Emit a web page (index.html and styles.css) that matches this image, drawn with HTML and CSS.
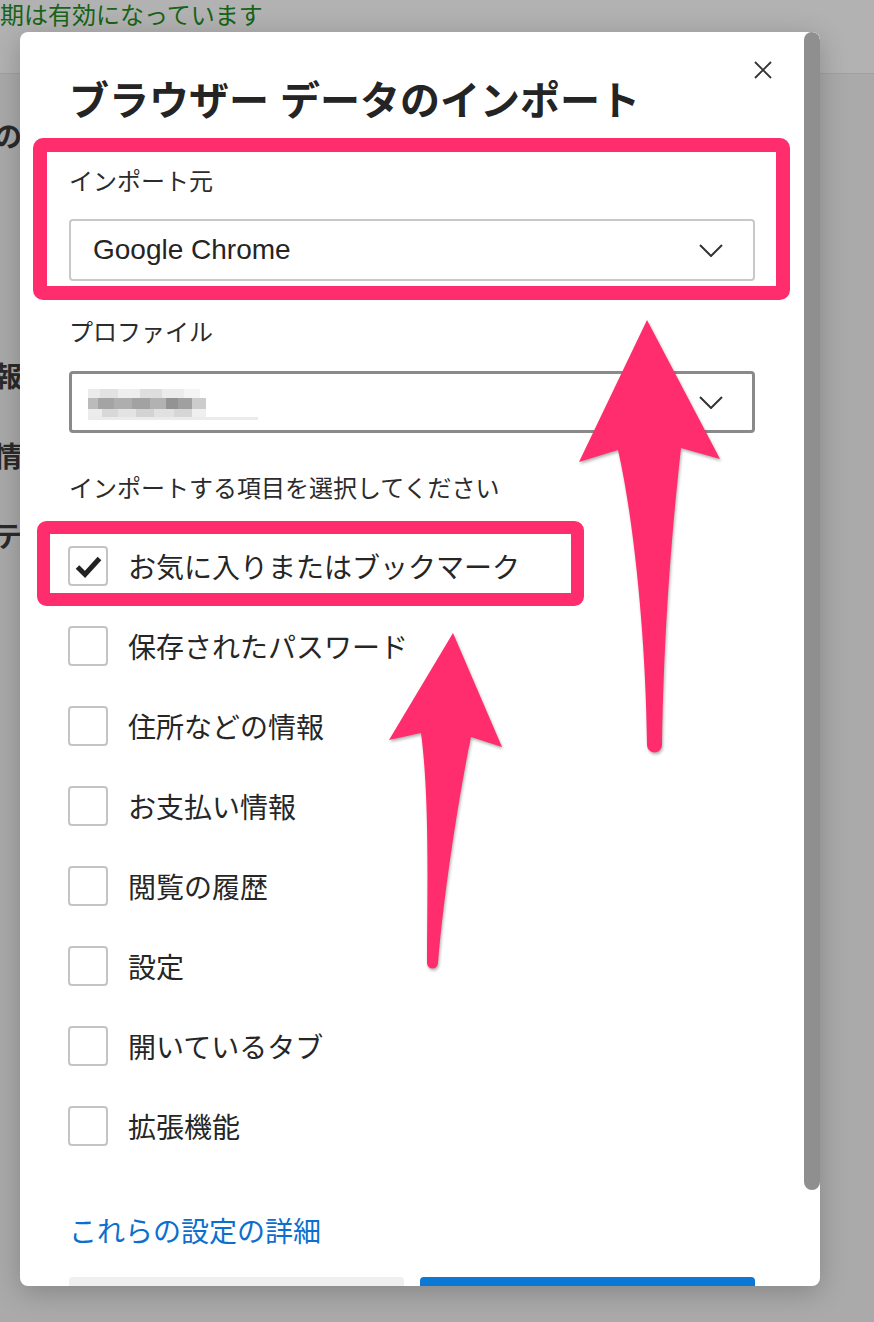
FILE: index.html
```html
<!DOCTYPE html>
<html lang="ja">
<head>
<meta charset="utf-8">
<title>ブラウザー データのインポート</title>
<link rel="stylesheet" href="styles.css">
</head>
<body>
<div class="page">
  <div class="topbar"><span class="status">期は有効になっています</span></div>
  <div class="bg-content">
    <div class="bg-line first">の</div>
    <div class="bg-line gap">報</div>
    <div class="bg-line">情</div>
    <div class="bg-line">テ</div>
  </div>
</div>

<div class="dialog">
  <div class="scrollbar"></div>
  <div class="dialog-body">
    <div class="header">
      <h1 class="title">ブラウザー データのインポート</h1>
      <span class="close">
        <svg width="18" height="18" viewBox="0 0 18 18"><path d="M1 1 L17 17 M17 1 L1 17" stroke="#333" stroke-width="1.8" fill="none"/></svg>
      </span>
    </div>

    <div class="field-label l1">インポート元</div>
    <div class="select">
      <span class="select-value">Google Chrome</span>
      <svg class="chev" width="24" height="13" viewBox="0 0 24 13"><path d="M1 1 L12 12 L23 1" stroke="#333" stroke-width="2" fill="none"/></svg>
    </div>

    <div class="field-label l2">プロファイル</div>
    <div class="select focused">
      <span class="mosaic">
        <span class="mrow r1"></span>
        <span class="mrow r2"></span>
        <span class="mrow r3"></span>
        <span class="mrow r4"></span>
      </span>
      <svg class="chev" width="24" height="13" viewBox="0 0 24 13"><path d="M1 1 L12 12 L23 1" stroke="#333" stroke-width="2" fill="none"/></svg>
    </div>

    <div class="field-label l3">インポートする項目を選択してください</div>
    <ul class="items">
      <li class="item"><span class="box checked"><svg width="36" height="36" viewBox="0 0 36 36"><path d="M7.5 19 L15 26.5 L29.5 10.5" stroke="#222" stroke-width="5" fill="none"/></svg></span><span>お気に入りまたはブックマーク</span></li>
      <li class="item"><span class="box"></span><span>保存されたパスワード</span></li>
      <li class="item"><span class="box"></span><span>住所などの情報</span></li>
      <li class="item"><span class="box"></span><span>お支払い情報</span></li>
      <li class="item"><span class="box"></span><span>閲覧の履歴</span></li>
      <li class="item"><span class="box"></span><span>設定</span></li>
      <li class="item"><span class="box"></span><span>開いているタブ</span></li>
      <li class="item"><span class="box"></span><span>拡張機能</span></li>
    </ul>

    <a class="link">これらの設定の詳細</a>

    <div class="buttons">
      <span class="btn secondary"></span>
      <span class="btn primary"></span>
    </div>
  </div>
</div>

<svg class="annotations" width="874" height="1322" viewBox="0 0 874 1322">
  <rect x="40" y="145" width="743" height="148" rx="3" fill="none" stroke="#ff2d6d" stroke-width="14"/>
  <rect x="43.5" y="527.5" width="534" height="72" rx="3" fill="none" stroke="#ff2d6d" stroke-width="13"/>
  <g class="arrow">
    <path d="M647 320 L720 459 L681 448 C673 520 664 620 662 745 A7.5 7.5 0 0 1 647 745 C646 640 634 520 618 450 L579 462 Z" fill="#ff2d6d"/>
    <path d="M453 633 L502 747 L471 737 C462 780 445 880 438 963 A5.5 5.5 0 0 1 427 963 C427 900 430 800 421 733 L389 740 Z" fill="#ff2d6d"/>
  </g>
</svg>
</body>
</html>
```

FILE: styles.css
```css
* { box-sizing: border-box; }

html, body {
  margin: 0;
  padding: 0;
}

body {
  width: 874px;
  height: 1322px;
  overflow: hidden;
  background: #aaaaaa;
  font-family: "Liberation Sans", "Noto Sans CJK JP", sans-serif;
  position: relative;
}

.page {
  height: 1322px;
}

.topbar {
  height: 74px;
  background: #b2b2b2;
  border-bottom: 1px solid #a0a0a0;
}

.status {
  display: block;
  font-size: 24px;
  line-height: 32px;
  color: #176317;
}

.bg-content {
  margin-left: -6px;
  padding-top: 44px;
}

.bg-line {
  font-size: 28px;
  font-weight: 700;
  line-height: 80px;
  color: #2a2a2a;
}

.bg-line.first {
  line-height: 40px;
}

.bg-line.gap {
  margin-top: 180px;
}

.dialog {
  position: absolute;
  left: 20px;
  top: 32px;
  width: 800px;
  height: 1254px;
  background: #ffffff;
  border-radius: 8px;
  overflow: hidden;
  box-shadow: 0 6px 28px rgba(0, 0, 0, 0.22);
}

.scrollbar {
  position: absolute;
  right: 0;
  top: 0;
  width: 16px;
  height: 1158px;
  background: #8f8f8f;
  border-radius: 8px;
}

.dialog-body {
  padding: 29px 65px 0 49px;
}

.header {
  display: flex;
  justify-content: space-between;
  align-items: flex-start;
  margin-right: -17px;
}

.title {
  margin: 16px 0 0 0;
  font-size: 40px;
  line-height: 48px;
  font-weight: 700;
  color: #242424;
}

.close {
  display: block;
  width: 18px;
  height: 18px;
}

.close svg {
  display: block;
}

.field-label {
  font-size: 24px;
  line-height: 32px;
  color: #2b2b2b;
}

.l1 { margin-top: 41px; }
.l2 { margin-top: 36px; }
.l3 { margin-top: 40px; }

.select {
  margin-top: 21px;
  height: 62px;
  border: 2px solid #c8c8c8;
  border-radius: 4px;
  display: flex;
  align-items: center;
  justify-content: space-between;
  padding: 0 30px 0 22px;
  font-size: 28px;
  color: #242424;
}

.select.focused {
  margin-top: 22px;
  border: 3px solid #8a8a8a;
  padding-left: 16px;
  padding-right: 29px;
}

.chev {
  display: block;
}

.mosaic {
  display: flex;
  flex-direction: column;
  width: 170px;
  margin-top: 4px;
}

.mrow {
  display: block;
  height: 9px;
}

.mrow.r1 {
  width: 112px;
  background: linear-gradient(90deg, #ebebeb 0 12px, #e2e2e2 12px 30px, #eeeeee 30px 52px, #dedede 52px 74px, #ececec 74px 96px, #f4f4f4 96px 112px);
}

.mrow.r2 {
  height: 11px;
  width: 118px;
  background: linear-gradient(90deg, #bbbbbb 0 10px, #a4a4a4 10px 26px, #aeaeae 26px 44px, #a2a2a2 44px 62px, #b2b2b2 62px 78px, #939393 78px 90px, #a0a0a0 90px 104px, #cccccc 104px 118px);
}

.mrow.r3 {
  height: 8px;
  width: 118px;
  background: linear-gradient(90deg, #ececec 0 14px, #d8d8d8 14px 30px, #e3e3e3 30px 48px, #d3d3d3 48px 66px, #e1e1e1 66px 86px, #d6d6d6 86px 104px, #efefef 104px 118px);
}

.mrow.r4 {
  height: 3px;
  width: 170px;
  background: #ebebeb;
}

.items {
  list-style: none;
  margin: 21px 0 0 -1px;
  padding: 0;
}

.item {
  height: 80px;
  display: flex;
  align-items: center;
  gap: 20px;
  font-size: 28px;
  color: #262626;
}

.box {
  width: 40px;
  height: 40px;
  flex: none;
  border: 2px solid #c4c4c4;
  border-radius: 4px;
  display: flex;
  align-items: center;
  justify-content: center;
}

.box svg {
  display: block;
}

.link {
  display: block;
  margin-top: 47px;
  font-size: 28px;
  line-height: 40px;
  color: #0b6fcf;
}

.buttons {
  margin-top: 24px;
  display: grid;
  grid-template-columns: 1fr 1fr;
  gap: 16px;
}

.btn {
  display: block;
  height: 64px;
  border-radius: 4px;
}

.btn.secondary { background: #efefef; }
.btn.primary { background: #0a78d4; }

.annotations {
  position: absolute;
  left: 0;
  top: 0;
  pointer-events: none;
}

.arrow {
  filter: drop-shadow(1px 2px 1.5px rgba(0, 0, 0, 0.3));
}
```
